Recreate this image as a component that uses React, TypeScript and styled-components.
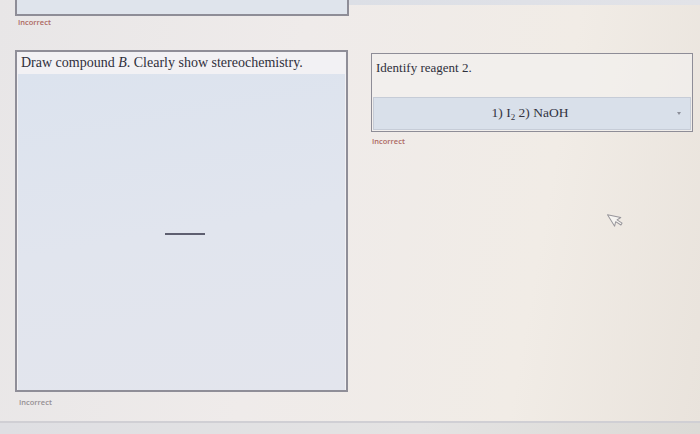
import styled, { createGlobalStyle } from "styled-components";

const GlobalStyle = createGlobalStyle`
  html, body {
    margin: 0;
    padding: 0;
  }
  body {
    font-family: "Liberation Serif", "Times New Roman", serif;
  }
`

export default function App() {
  return (
    <Page>
      <GlobalStyle />
      <HeaderRow>
        <PrevStub />
        <TopStrip />
      </HeaderRow>
      <Feedback $tone="red" $indent={18}>Incorrect</Feedback>

      <MainRow>
        <LeftColumn>
          <DrawPanel>
            <PanelTitle $size={14}>
              Draw compound <i>B</i>. Clearly show stereochemistry.
            </PanelTitle>
            <Canvas>
              <Bond />
            </Canvas>
          </DrawPanel>
          <Feedback $tone="grey" $indent={4} $gap={5}>Incorrect</Feedback>
        </LeftColumn>

        <RightColumn>
          <ReagentPanel>
            <PanelTitle $small $size={13}>Identify reagent 2.</PanelTitle>
            <SelectBox>
              <span>
                1) I<sub>2</sub> 2) NaOH
              </span>
              <Caret />
            </SelectBox>
          </ReagentPanel>
          <Feedback $tone="red" $indent={1} $gap={4}>Incorrect</Feedback>
        </RightColumn>
      </MainRow>

      <Footer />

      <Pointer width="15" height="19" viewBox="0 0 15 19">
        <path
          d="M1 1 L1 14.5 L4.3 11.2 L7 16.8 L9 15.8 L6.4 10.4 L10.8 10.4 Z"
          fill="#f6f4f1"
          stroke="#98969b"
          strokeWidth="1"
          strokeLinejoin="round"
        />
      </Pointer>
    </Page>
  )
}

const Page = styled.div`
  position: relative;
  width: 700px;
  height: 434px;
  overflow: hidden;
  display: flex;
  flex-direction: column;
  background: linear-gradient(100deg, #e8e6e7 0%, #efebea 40%, #f1ece6 75%, #e9e3dc 100%);
`

const HeaderRow = styled.div`
  display: flex;
  align-items: flex-start;
  height: 16px;
`

const PrevStub = styled.div`
  margin-left: 15px;
  width: 330px;
  height: 14px;
  border: 2px solid #8e8d97;
  border-top: none;
  background: #dfe4ec;
`

const TopStrip = styled.div`
  flex: 1;
  height: 5px;
  background: linear-gradient(90deg, #dcdfe6, #e2e3e8);
`

const Feedback = styled.div<{ $tone: "red" | "grey"; $indent: number; $gap?: number }>`
  margin-top: ${p => p.$gap ?? 1}px;
  padding-left: ${p => p.$indent}px;
  font-family: "Open Sans", "Liberation Sans", sans-serif;
  font-size: 7.5px;
  font-weight: 600;
  line-height: 10px;
  color: ${p => (p.$tone === "red" ? "#ad6862" : "#958f93")};
`

const MainRow = styled.div`
  display: flex;
  align-items: flex-start;
  margin-top: 23px;
`

const LeftColumn = styled.div`
  margin-left: 15px;
  width: 333px;
`

const RightColumn = styled.div`
  margin-left: 23px;
  width: 322px;
  padding-top: 3px;
`

const DrawPanel = styled.div`
  border: 2px solid #8f8e98;
  background: #f2f1f4;
  display: flex;
  flex-direction: column;
`

const PanelTitle = styled.div<{ $small?: boolean; $size: number }>`
  padding: ${p => (p.$small ? "6px 0 0 4px" : "0 0 0 4px")};
  height: ${p => (p.$small ? "16px" : "22px")};
  font-size: ${p => p.$size}px;
  line-height: ${p => (p.$small ? "16px" : "22px")};
  color: #2f2f3b;
  white-space: nowrap;

  i {
    font-style: italic;
  }
`

const Canvas = styled.div`
  position: relative;
  margin: 0 1px 0 1px;
  height: 316px;
  background: linear-gradient(170deg, #dce3ee 0%, #e1e5ee 50%, #e3e5ed 100%);
`

const Bond = styled.div`
  position: absolute;
  left: 147px;
  top: 159px;
  width: 40px;
  height: 2px;
  background: #5e5f70;
`

const ReagentPanel = styled.div`
  border: 1.5px solid #8e8d97;
  background: rgba(244, 241, 240, 0.6);
  display: flex;
  flex-direction: column;
`

const SelectBox = styled.div`
  position: relative;
  margin: 21px 1px 1px 1px;
  height: 31px;
  border: 1px solid #c6ccd7;
  background: #d9e0ea;
  display: flex;
  align-items: center;
  justify-content: center;
  font-size: 13.5px;
  color: #33333f;

  span {
    margin-right: 4px;
  }
  sub {
    font-size: 9px;
    vertical-align: -3px;
  }
`

const Caret = styled.div`
  position: absolute;
  right: 9px;
  top: 14px;
  width: 0;
  height: 0;
  border-left: 2px solid transparent;
  border-right: 2px solid transparent;
  border-top: 3px solid #8c8f99;
`

const Footer = styled.div`
  margin-top: auto;
  height: 11px;
  border-top: 2px solid #d0cfd4;
  background: linear-gradient(90deg, #dfdfe3, #e4e3e3 60%, #dcdad6);
`

const Pointer = styled.svg`
  position: absolute;
  left: 610px;
  top: 209px;
  transform: rotate(-32deg);
`
